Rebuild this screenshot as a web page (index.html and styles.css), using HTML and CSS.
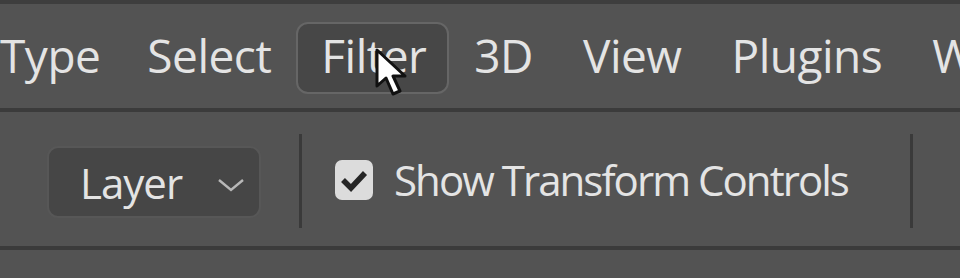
FILE: index.html
```html
<!DOCTYPE html>
<html>
<head>
<meta charset="utf-8">
<link rel="stylesheet" href="styles.css">
</head>
<body>
<div class="app">
  <div class="topline"></div>
  <nav class="menubar">
    <span class="menu-item first">Type</span>
    <span class="menu-item">Select</span>
    <span class="menu-item active">Filter
      <svg class="cursor" width="36" height="50" viewBox="0 0 36 50">
        <path d="M3 2 L3 38 L12 30 L19 46 L26 43 L19 28 L31 28 Z" fill="#ffffff" stroke="#111111" stroke-width="3" stroke-linejoin="round"/>
      </svg>
    </span>
    <span class="menu-item">3D</span>
    <span class="menu-item">View</span>
    <span class="menu-item">Plugins</span>
    <span class="menu-item last">W</span>
  </nav>
  <div class="sep"></div>
  <div class="options">
    <div class="dropdown">
      <span class="dropdown-label">Layer</span>
      <svg class="chevron" width="28" height="14" viewBox="0 0 28 14">
        <path d="M2 2 L14 12 L26 2" fill="none" stroke="#b8b8b8" stroke-width="2.4"/>
      </svg>
    </div>
    <div class="vdivider"></div>
    <label class="check">
      <span class="checkbox">
        <svg width="28" height="24" viewBox="0 0 28 24">
          <path d="M3 12 L11 20 L25 5" fill="none" stroke="#262626" stroke-width="5.5" stroke-linejoin="miter"/>
        </svg>
      </span>
      <span class="check-label">Show Transform Controls</span>
    </label>
    <div class="vdivider second"></div>
  </div>
  <div class="sep"></div>
  <div class="rest"></div>
</div>
</body>
</html>
```
FILE: styles.css
```css
html, body {
  margin: 0;
  padding: 0;
  background: #535353;
}
.app {
  width: 960px;
  height: 278px;
  overflow: hidden;
  background: #535353;
  font-family: "Open Sans", "Noto Sans", "DejaVu Sans", sans-serif;
  color: #e4e4e4;
}
.topline {
  height: 4px;
  background: #3e3e3e;
}
.menubar {
  height: 104px;
  display: flex;
  align-items: center;
  white-space: nowrap;
  font-size: 46px;
}
.menu-item {
  position: relative;
  display: flex;
  align-items: center;
  height: 72px;
  padding: 0 25px 6px;
  box-sizing: border-box;
  margin-top: 4px;
  letter-spacing: -0.5px;
}
.menu-item.first {
  padding-left: 0;
  padding-right: 22px;
}
.menu-item.last {
  padding-right: 0;
}
.menu-item.active {
  background: #474747;
  border: 2px solid #666666;
  border-radius: 12px;
  padding: 0 21px 6px 23px;
}
.cursor {
  position: absolute;
  left: 76px;
  top: 24px;
}
.sep {
  height: 4px;
  background: #3b3b3b;
}
.options {
  height: 134px;
  display: flex;
  align-items: center;
  font-size: 42px;
}
.dropdown {
  margin-left: 47px;
  width: 214px;
  height: 72px;
  box-sizing: border-box;
  background: #464646;
  border: 2px solid #575757;
  border-radius: 11px;
  display: flex;
  align-items: center;
  padding-left: 31px;
  margin-top: 6px;
}
.dropdown-label {
  flex: 1;
  letter-spacing: -1px;
}
.chevron {
  margin-right: 14px;
  margin-top: 6px;
}
.vdivider {
  width: 3px;
  height: 94px;
  background: #3a3a3a;
  margin-left: 38px;
  margin-top: 4px;
}
.vdivider.second {
  margin-left: auto;
  margin-right: 47px;
}
.check {
  display: flex;
  align-items: center;
  margin-left: 33px;
}
.checkbox {
  width: 38px;
  height: 40px;
  border-radius: 7px;
  background: #dcdcdc;
  display: flex;
  align-items: center;
  justify-content: center;
  margin-top: 2px;
}
.check-label {
  margin-left: 21px;
  letter-spacing: -1.95px;
}
.rest {
  height: 28px;
}
```
